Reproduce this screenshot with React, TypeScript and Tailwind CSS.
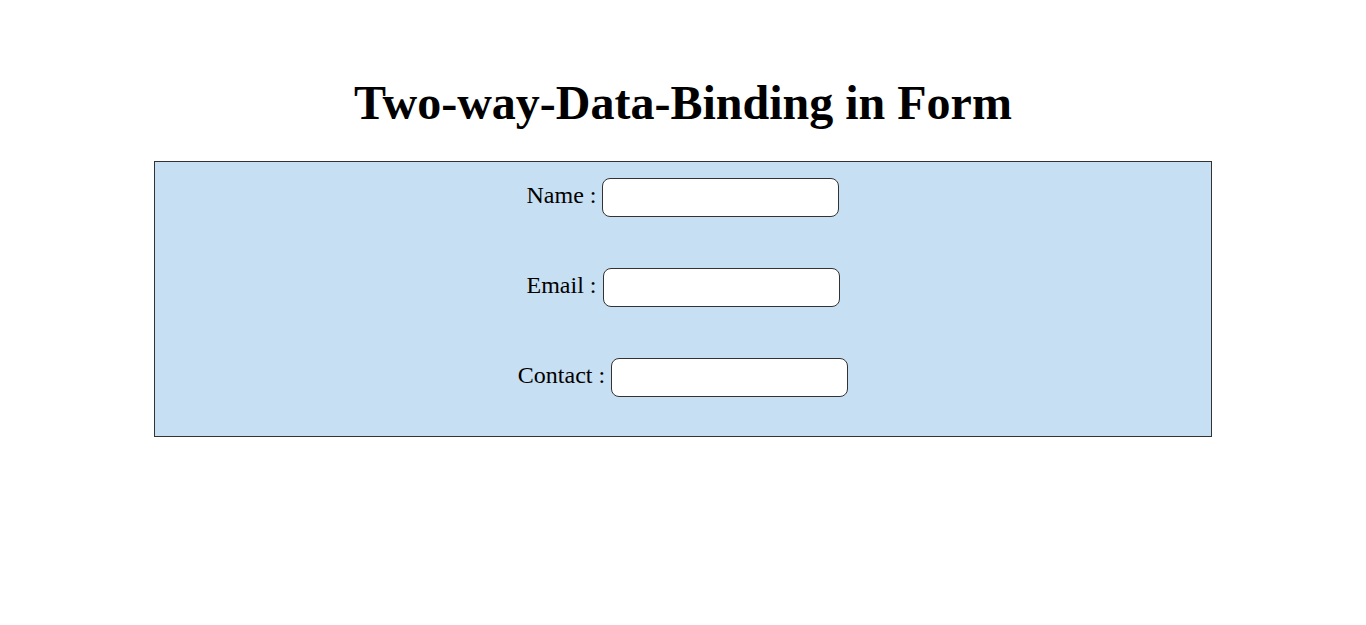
export default function App() {
  const fields = ["Name", "Email", "Contact"];
  return (
    <div className="min-h-[625px] bg-white font-['Liberation_Serif',serif] text-black">
      <h1 className="pt-[74px] text-center text-[48px] font-bold leading-[58px]">
        Two-way-Data-Binding in Form
      </h1>
      <div className="mx-auto mt-[29px] flex w-[1058px] flex-col items-center gap-[51px] border border-[#333] bg-[#c7dff2] pt-[16px] pb-[39px]">
        {fields.map((f) => (
          <div key={f} className="flex items-center gap-[6px]">
            <label className="pb-[5px] text-[24px] leading-[28px]">{f} :</label>
            <input
              type="text"
              className="h-[39px] w-[237px] rounded-[8px] border border-[#333] bg-white px-2"
            />
          </div>
        ))}
      </div>
    </div>
  );
}
